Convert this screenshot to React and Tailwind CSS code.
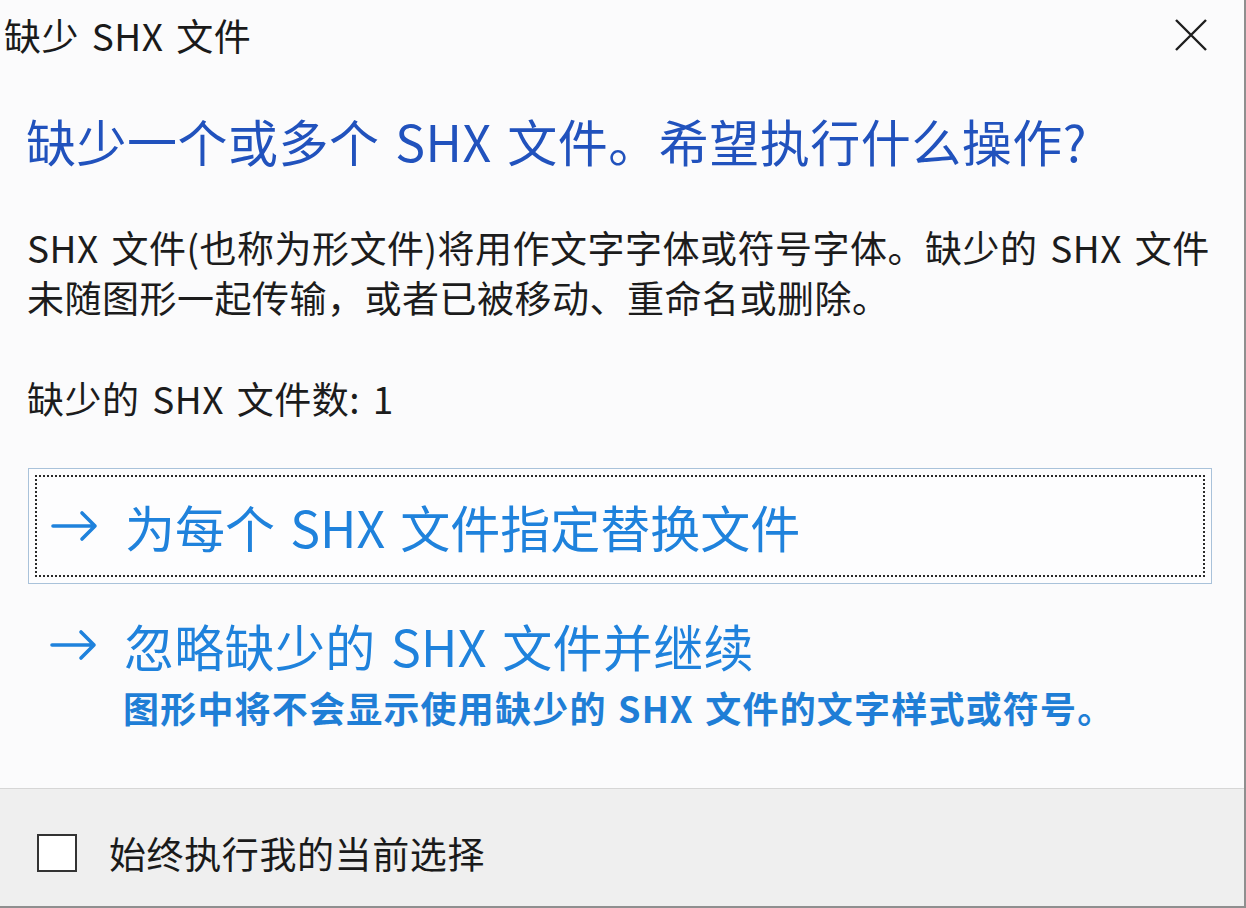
import React from "react";

const font = { fontFamily: '"Noto Sans CJK SC", "Noto Sans", sans-serif' };

function Arrow({ color }) {
  return (
    <svg width="48" height="32" viewBox="0 0 48 32" className="shrink-0">
      <path d="M2 16 H44 M31 3 L44 16 L31 29" fill="none" stroke={color} strokeWidth="3.6" strokeLinecap="round" strokeLinejoin="round" />
    </svg>
  );
}

export default function App() {
  return (
    <div
      className="w-[1246px] h-[908px] bg-[#fbfbfc] flex flex-col border-r-2 border-[#8f8f8f] overflow-hidden"
      style={font}
    >
      {/* title bar */}
      <div className="h-[70px] flex items-center justify-between pl-[4px] pr-[36px] shrink-0">
        <div className="text-[37px] leading-[44px] text-[#1a1a1a] tracking-[0.5px] [word-spacing:4px]">缺少 SHX 文件</div>
        <svg width="34" height="34" viewBox="0 0 34 34">
          <path d="M2 2 L32 32 M32 2 L2 32" stroke="#1e1e1e" strokeWidth="2.4" />
        </svg>
      </div>

      {/* heading */}
      <div className="mt-[40px] pl-[26px] text-[50px] leading-[60px] text-[#2152bd] whitespace-nowrap tracking-[0.5px] [word-spacing:4px]">
        缺少一个或多个 SHX 文件。希望执行什么操作?
      </div>

      {/* body */}
      <div className="mt-[52px] pl-[27px] pr-[10px] text-[37px] leading-[50px] text-[#1c1c1c] tracking-[0.5px] [word-spacing:4px]">
        <div className="whitespace-nowrap">SHX 文件(也称为形文件)将用作文字字体或符号字体。缺少的 SHX 文件</div>
        <div className="whitespace-nowrap">未随图形一起传输，或者已被移动、重命名或删除。</div>
      </div>

      <div className="mt-[51px] pl-[27px] text-[37px] leading-[50px] text-[#1c1c1c] whitespace-nowrap tracking-[0.5px] [word-spacing:4px]">
        缺少的 SHX 文件数: 1
      </div>

      {/* option 1 */}
      <div className="mt-[45px] ml-[28px] w-[1184px] h-[116px] border border-[#a9c2da] bg-[#fdfdfe] p-[6px] shrink-0">
        <div className="h-full border-2 border-dotted border-[#2a2a2a] flex items-center gap-[26px] pl-[14px]">
          <Arrow color="#1f82dc" />
          <span className="text-[50px] leading-[60px] text-[#1f82dc] whitespace-nowrap [word-spacing:4px]">为每个 SHX 文件指定替换文件</span>
        </div>
      </div>

      {/* option 2 */}
      <div className="mt-[31px] pl-[50px] flex items-center gap-[26px]">
        <Arrow color="#1f82dc" />
        <span className="text-[50px] leading-[60px] text-[#1f82dc] whitespace-nowrap tracking-[0.3px] [word-spacing:4px]">忽略缺少的 SHX 文件并继续</span>
      </div>
      <div className="mt-[10px] pl-[123px] text-[36px] leading-[44px] font-semibold text-[#1f7ed6] whitespace-nowrap tracking-[1.2px] [word-spacing:2px]">
        图形中将不会显示使用缺少的 SHX 文件的文字样式或符号。
      </div>

      {/* footer */}
      <div className="mt-auto h-[120px] shrink-0 bg-[#efefef] border-t border-[#d6d6d6] border-b-2 border-b-[#8f8f8f] flex items-center pl-[37px] pt-[10px]">
        <div className="w-[40px] h-[38px] bg-white border-2 border-[#333333] shrink-0" />
        <span className="ml-[32px] text-[37px] leading-[44px] text-[#1a1a1a] whitespace-nowrap tracking-[0.6px]">始终执行我的当前选择</span>
      </div>
    </div>
  );
}
